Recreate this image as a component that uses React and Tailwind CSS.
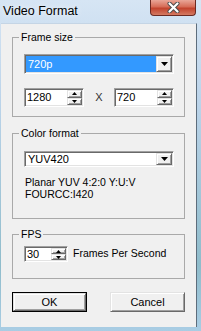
import React from "react";

const sunken =
  "border border-t-[#a0a0a0] border-l-[#a0a0a0] border-r-white border-b-white shadow-[inset_1px_1px_0_#696969,inset_-1px_-1px_0_#e3e3e3] bg-white p-[1px]";
const raised =
  "border border-t-[#e3e3e3] border-l-[#e3e3e3] border-r-[#696969] border-b-[#696969] shadow-[inset_1px_1px_0_#ffffff,inset_-1px_-1px_0_#a0a0a0] bg-[#f0f0f0]";

const Arrow = ({ up, w = 7, h = 4 }) => (
  <svg width={w} height={h} viewBox={`0 0 ${w} ${h}`}>
    {up ? (
      <polygon points={`0,${h} ${w},${h} ${w / 2},0`} fill="#000" />
    ) : (
      <polygon points={`0,0 ${w},0 ${w / 2},${h}`} fill="#000" />
    )}
  </svg>
);

const Combo = ({ value, selected, className }) => (
  <div className={`${sunken} flex ${className}`}>
    <span
      className={`flex-1 flex items-center pl-[2px] text-[11px] ${
        selected ? "bg-[#3399ff] text-white" : "text-black"
      }`}
    >
      {value}
    </span>
    <span className={`${raised} w-[16px] flex items-center justify-center`}>
      <Arrow />
    </span>
  </div>
);

const Spin = ({ value, className }) => (
  <div className={`${sunken} flex ${className}`}>
    <span className="flex-1 flex items-center pl-[1px] text-[11px] text-black">
      {value}
    </span>
    <div className="flex flex-col w-[15px]">
      <span className={`${raised} flex-1 flex items-center justify-center`}>
        <Arrow up w={5} h={3} />
      </span>
      <span className={`${raised} flex-1 flex items-center justify-center`}>
        <Arrow w={5} h={3} />
      </span>
    </div>
  </div>
);

const Group = ({ title, className, children }) => (
  <fieldset className={`border border-[#a9a9a9] w-[173px] ${className}`}>
    <legend className="ml-[6px] px-[2px] text-[10.5px] leading-[14px] text-black">
      {title}
    </legend>
    {children}
  </fieldset>
);

export default function App() {
  return (
    <div className="w-[201px] h-[331px] flex flex-col overflow-hidden bg-[linear-gradient(180deg,#d6e5f4_0%,#bcd4ea_30%,#8fbccb_80%,#a9cde4_100%)] font-['Liberation_Sans',Arial,sans-serif]">
      <div className="h-[23px] flex justify-between items-start">
        <span className="pl-[3px] pt-[4px] text-[12.5px] leading-[15px] text-black [text-shadow:0_0_6px_#ffffff]">
          Video Format
        </span>
        <span className="mr-[5px] w-[46px] h-[16px] flex items-center justify-center rounded-b-[4px] border border-t-0 border-[#6b2a22] bg-[linear-gradient(180deg,#e9a697_0%,#d66c57_45%,#c2432d_55%,#d47a62_100%)]">
          <svg width="13" height="11" viewBox="0 0 13 11">
            <path d="M2.5 1.5 L10.5 9.5 M10.5 1.5 L2.5 9.5" stroke="#4a4a4a" strokeWidth="4" strokeLinecap="round" />
            <path d="M2.5 1.5 L10.5 9.5 M10.5 1.5 L2.5 9.5" stroke="#ffffff" strokeWidth="2.2" strokeLinecap="round" />
          </svg>
        </span>
      </div>
      <div className="ml-[1px] w-[196px] h-[304px] bg-[#f0f0f0] border-r border-t border-r-[#5d6d7c] border-t-[#c5d5e5] px-[11px] pt-[6px] flex flex-col">
        <Group title="Frame size" className="h-[87px]">
          <div className="pl-[11px] pt-[10px]">
            <Combo value="720p" selected className="w-[150px] h-[20px]" />
            <div className="mt-[14px] flex items-center">
              <Spin value="1280" className="w-[60px] h-[19px]" />
              <span className="w-[30px] text-center text-[11px] text-[#333]">X</span>
              <Spin value="720" className="w-[60px] h-[19px]" />
            </div>
          </div>
        </Group>
        <Group title="Color format" className="h-[93px] mt-[9px]">
          <div className="pl-[11px] pt-[11px]">
            <Combo value="YUV420" className="w-[150px] h-[16px]" />
            <div className="mt-[9px] pl-[1px] text-[10.5px] leading-[12px] text-black">
              <div>Planar YUV 4:2:0 Y:U:V</div>
              <div>FOURCC:I420</div>
            </div>
          </div>
        </Group>
        <Group title="FPS" className="h-[52px] mt-[8px]">
          <div className="pl-[11px] pt-[5px] flex items-center">
            <Spin value="30" className="w-[44px] h-[16px]" />
            <span className="ml-[5px] text-[10.5px] text-black">Frames Per Second</span>
          </div>
        </Group>
        <div className="mt-[13px] w-[173px] flex justify-between">
          <div className="w-[75px] h-[20px] border border-black flex">
            <span className={`${raised} flex-1 flex items-center justify-center text-[11px] text-black`}>
              OK
            </span>
          </div>
          <span className={`${raised} w-[75px] h-[20px] flex items-center justify-center text-[11px] text-black`}>
            Cancel
          </span>
        </div>
      </div>
    </div>
  );
}
